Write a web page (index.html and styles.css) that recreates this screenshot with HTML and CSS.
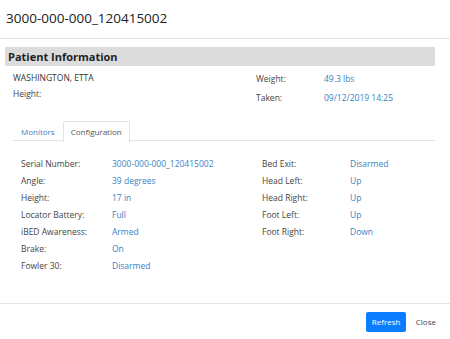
FILE: index.html
```html
<!DOCTYPE html>
<html lang="en">
<head>
    <meta charset="UTF-8">
    <title>3000-000-000_120415002</title>
    <link rel="stylesheet" href="styles.css">
</head>
<body>
    <div class="modal">
        <div class="modal-header">
            <h1>3000-000-000_120415002</h1>
        </div>

        <div class="modal-body">
            <div class="section-title">Patient Information</div>
            <div class="patient">
                <div class="patient-col">
                    <div class="row"><span class="name">WASHINGTON, ETTA</span></div>
                    <div class="row"><span class="label">Height:</span></div>
                </div>
                <div class="patient-col right">
                    <div class="row"><span class="label">Weight:</span><span class="value">49.3 lbs</span></div>
                    <div class="row"><span class="label">Taken:</span><span class="value">09/12/2019 14:25</span></div>
                </div>
            </div>

            <div class="tabs">
                <a class="tab">Monitors</a>
                <a class="tab active">Configuration</a>
            </div>

            <div class="config">
                <div class="config-col">
                    <div class="item"><span class="label">Serial Number:</span><span class="value">3000-000-000_120415002</span></div>
                    <div class="item"><span class="label">Angle:</span><span class="value">39 degrees</span></div>
                    <div class="item"><span class="label">Height:</span><span class="value">17 in</span></div>
                    <div class="item"><span class="label">Locator Battery:</span><span class="value">Full</span></div>
                    <div class="item"><span class="label">iBED Awareness:</span><span class="value">Armed</span></div>
                    <div class="item"><span class="label">Brake:</span><span class="value">On</span></div>
                    <div class="item"><span class="label">Fowler 30:</span><span class="value">Disarmed</span></div>
                </div>
                <div class="config-col right">
                    <div class="item"><span class="label">Bed Exit:</span><span class="value">Disarmed</span></div>
                    <div class="item"><span class="label">Head Left:</span><span class="value">Up</span></div>
                    <div class="item"><span class="label">Head Right:</span><span class="value">Up</span></div>
                    <div class="item"><span class="label">Foot Left:</span><span class="value">Up</span></div>
                    <div class="item"><span class="label">Foot Right:</span><span class="value">Down</span></div>
                </div>
            </div>
        </div>

        <div class="modal-footer">
            <button class="btn btn-primary">Refresh</button>
            <button class="btn btn-link">Close</button>
        </div>
    </div>
</body>
</html>
```

FILE: styles.css
```css
body {
    margin: 0;
    background: white;
    font-family: "Open Sans", "Noto Sans", sans-serif;
    color: #333;
}
.modal {
    width: 450px;
    height: 339px;
    display: flex;
    flex-direction: column;
    overflow: hidden;
}
.modal-header {
    height: 39px;
    border-bottom: 1px solid #e5e5e5;
    display: flex;
    align-items: center;
    padding: 0 6px;
    box-sizing: border-box;
}
.modal-header h1 {
    margin: 0 0 2px;
    font-size: 13.5px;
    font-weight: normal;
    color: #222;
}
.modal-body {
    flex: 1;
    padding: 8px 15px 0 5px;
}
.section-title {
    background: #dcdcdc;
    font-weight: bold;
    font-size: 11px;
    padding: 0 3px;
    height: 19px;
    line-height: 19px;
    color: #222;
}
.patient {
    display: flex;
    padding: 3px 0 0 8px;
    font-size: 8.5px;
}
.patient-col {
    width: 243px;
    flex-shrink: 0;
    padding-top: 1px;
}
.patient-col.right {
    width: auto;
    flex: 1;
    padding-top: 0;
}
.patient .row {
    height: 16px;
    line-height: 16px;
    display: flex;
}
.patient .right .row {
    line-height: 19px;
    height: 19px;
}
.patient .right .label {
    width: 68px;
}
.name {
    color: #333;
}
.label {
    color: #444;
}
.value {
    color: #3a7fc4;
}
.tabs {
    display: flex;
    margin: 14px 0 0 8px;
    border-bottom: 1px solid #e3e3e3;
    font-size: 8px;
    height: 19px;
}
.tab {
    padding: 0 7px;
    line-height: 19px;
    color: #3a7fc4;
    border: 1px solid transparent;
    border-bottom: none;
    border-radius: 2px 2px 0 0;
}
.tab.active {
    color: #555;
    border-color: #e3e3e3;
    background: white;
    height: 20px;
}
.config {
    display: flex;
    padding: 14px 0 0 16px;
    font-size: 8.5px;
}
.config-col {
    width: 241px;
    flex-shrink: 0;
}
.config-col.right {
    width: auto;
    flex: 1;
}
.config .item {
    display: flex;
    height: 17px;
    line-height: 17px;
}
.config .label {
    width: 91px;
}
.config .right .label {
    width: 88px;
}
.modal-footer {
    border-top: 1px solid #e5e5e5;
    height: 35px;
    display: flex;
    align-items: center;
    justify-content: flex-end;
    padding: 0 8px 0 0;
}
.btn {
    font-family: inherit;
    font-size: 8px;
    border: none;
    border-radius: 2px;
    height: 20px;
    padding: 0 6px;
    cursor: pointer;
}
.btn-primary {
    background: #0a7cff;
    color: white;
    width: 40px;
    margin-right: 4px;
}
.btn-link {
    background: none;
    color: #444;
}
```
